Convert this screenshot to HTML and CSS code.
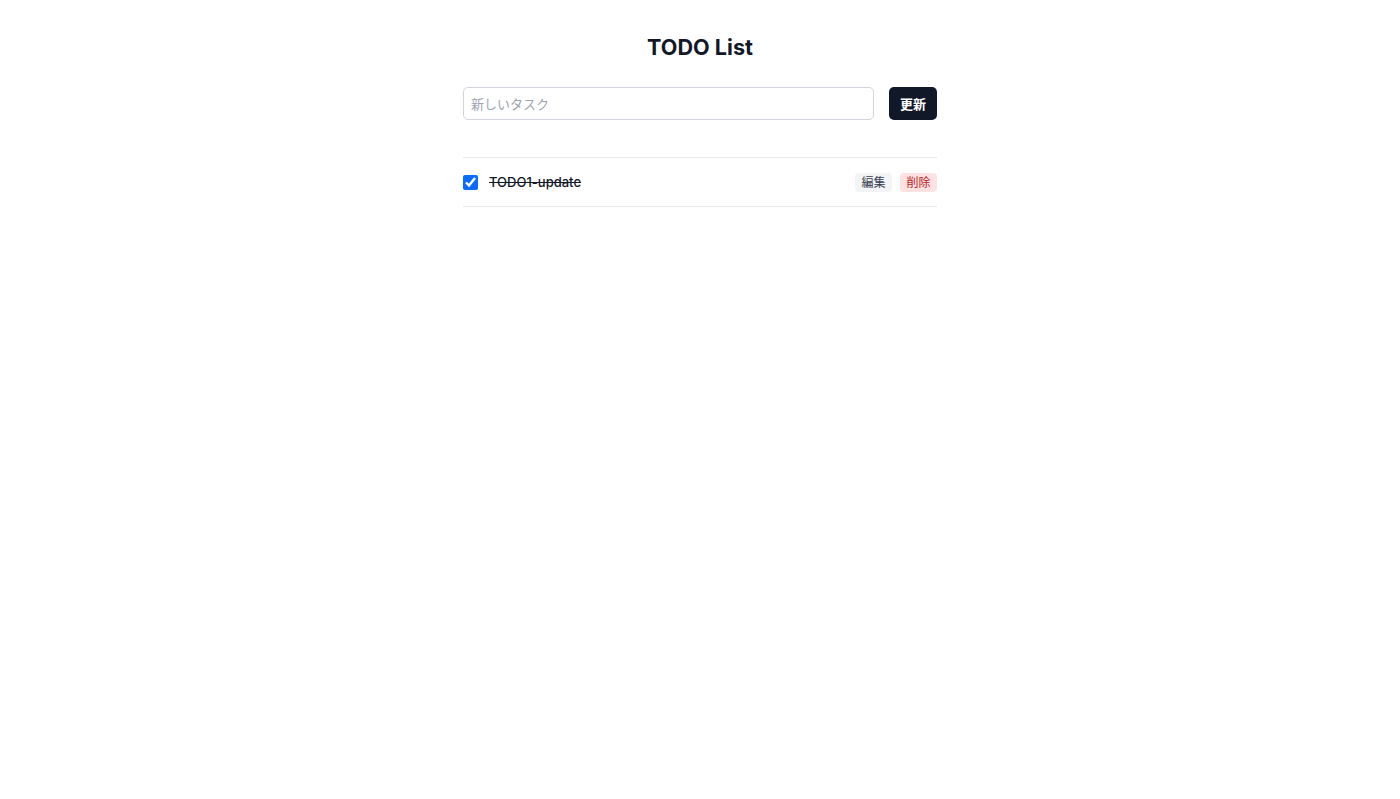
FILE: index.html
```html
<!DOCTYPE html>
<html lang="ja">
<head>
<meta charset="utf-8">
<title>TODO List</title>
<link rel="stylesheet" href="styles.css">
</head>
<body>
<main class="app">
  <h1 class="title">TODO List</h1>
  <form class="add-form">
    <input class="task-input" type="text" placeholder="新しいタスク">
    <button class="submit-btn" type="button">更新</button>
  </form>
  <ul class="todo-list">
    <li class="todo-item">
      <label class="todo-label">
        <input class="todo-check" type="checkbox" checked>
        <span class="todo-text done">TODO1-update</span>
      </label>
      <div class="todo-actions">
        <button class="chip chip-edit" type="button">編集</button>
        <button class="chip chip-delete" type="button">削除</button>
      </div>
    </li>
  </ul>
</main>
</body>
</html>
```

FILE: styles.css
```css
* { box-sizing: border-box; }
html, body { margin: 0; padding: 0; background: #fff; }
body {
  font-family: Inter, "Noto Sans CJK JP", sans-serif;
  color: #111827;
}
.app {
  width: 474px;
  margin: 0 auto;
  padding-top: 31px;
}
.title {
  margin: 0 0 24px;
  font-size: 21.6px;
  line-height: 32px;
  font-weight: 700;
  text-align: center;
  color: #111827;
}
.add-form {
  display: flex;
  gap: 15px;
  margin: 0 0 37px;
}
.task-input {
  flex: 1;
  height: 33px;
  border: 1px solid #d1d5db;
  border-radius: 5px;
  padding: 0 7px;
  font-family: inherit;
  font-size: 13px;
  color: #111827;
  outline: none;
}
.task-input::placeholder { color: #9ca3af; }
.submit-btn {
  height: 33px;
  padding: 0 11px;
  border: none;
  border-radius: 5px;
  background: #111827;
  color: #fff;
  font-family: inherit;
  font-size: 13px;
  font-weight: 700;
}
.todo-list {
  list-style: none;
  margin: 0;
  padding: 0;
}
.todo-item {
  display: flex;
  align-items: center;
  justify-content: space-between;
  padding: 12px 0;
  border-top: 1px solid #e5e7eb;
  border-bottom: 1px solid #e5e7eb;
  min-height: 50px;
}
.todo-label {
  display: flex;
  align-items: center;
  gap: 11px;
}
.todo-check {
  width: 15px;
  height: 15px;
  margin: 0;
  accent-color: #0b6bff;
}
.todo-text {
  font-size: 13px;
  line-height: 24px;
  font-weight: 500;
  color: #111827;
}
.todo-text.done { text-decoration: line-through; }
.todo-actions {
  display: flex;
  gap: 8px;
}
.chip {
  border: none;
  border-radius: 4px;
  padding: 2px 6.5px;
  font-family: inherit;
  font-size: 12px;
  line-height: 15px;
}
.chip-edit { background: #f3f4f6; color: #374151; }
.chip-delete { background: #fee2e2; color: #b91c1c; }
```
